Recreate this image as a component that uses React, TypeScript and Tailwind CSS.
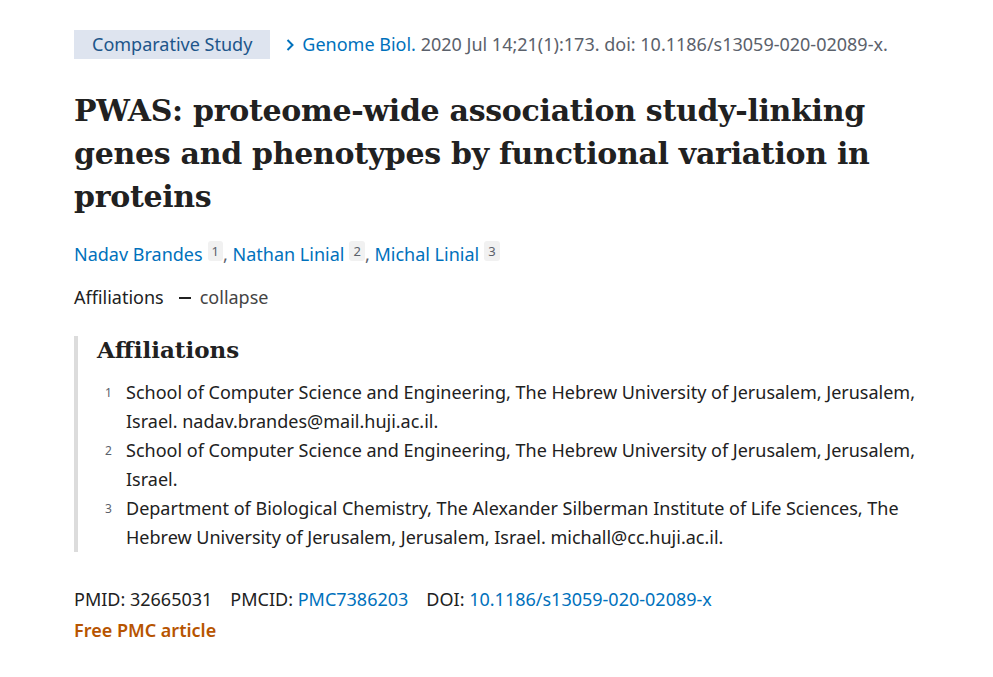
import React from 'react';

const sans = { fontFamily: '"Noto Sans", "Open Sans", sans-serif' };
const serif = { fontFamily: '"DejaVu Serif", serif' };

const affiliations = [
  'School of Computer Science and Engineering, The Hebrew University of Jerusalem, Jerusalem, Israel. nadav.brandes@mail.huji.ac.il.',
  'School of Computer Science and Engineering, The Hebrew University of Jerusalem, Jerusalem, Israel.',
  'Department of Biological Chemistry, The Alexander Silberman Institute of Life Sciences, The Hebrew University of Jerusalem, Jerusalem, Israel. michall@cc.huji.ac.il.',
];

const authors = [
  { name: 'Nadav Brandes', n: 1 },
  { name: 'Nathan Linial', n: 2 },
  { name: 'Michal Linial', n: 3 },
];

const App: React.FC = () => {
  return (
    <div className="min-h-[677px] bg-white text-[#212121]" style={sans}>
      <div className="w-[940px] pl-[74px] pt-[30px]">
        <div className="flex items-center text-[18px] leading-[29px]">
          <span className="bg-[#dee4ef] px-[18px] text-[#20558a]">Comparative Study</span>
          <svg className="ml-[15px] mr-[7px]" width="10" height="14" viewBox="0 0 10 14">
            <path d="M2.5 2 L7.5 7 L2.5 12" fill="none" stroke="#0071bc" strokeWidth="2" />
          </svg>
          <span className="whitespace-nowrap text-[#5b616b]">
            <span className="text-[#0071bc]">Genome Biol.</span> 2020 Jul 14;21(1):173. doi: 10.1186/s13059-020-02089-x.
          </span>
        </div>

        <h1 className="mt-[30px] text-[30px] font-bold leading-[43px] tracking-[-0.3px] text-[#212121]" style={serif}>
          PWAS: proteome-wide association study-linking genes and phenotypes by functional variation in proteins
        </h1>

        <div className="mt-[22px] text-[18px] leading-[29px]">
          {authors.map((a, i) => (
            <span key={a.n}>
              <span className="text-[#0071bc]">{a.name}</span>
              <span className="relative -top-[5px] ml-[5px] inline-block rounded-[3px] bg-[#f1f1f1] px-[4px] align-middle text-[13px] leading-[20px] text-[#5b616b]">
                {a.n}
              </span>
              {i < authors.length - 1 && <span className="text-[#5b616b]">, </span>}
            </span>
          ))}
        </div>

        <div className="mt-[14px] flex items-center text-[18px] leading-[29px]">
          <span>Affiliations</span>
          <span className="ml-[15px] mr-[9px] inline-block h-[2px] w-[12px] bg-[#212121]" />
          <span className="text-[#444]">collapse</span>
        </div>

        <div className="mt-[24px] border-l-[4px] border-[#dcdcdc] pl-[19px]">
          <h3 className="text-[23px] font-bold leading-[28px]" style={serif}>
            Affiliations
          </h3>
          <ul className="mt-[14px]">
            {affiliations.map((t, i) => (
              <li key={i} className="flex text-[18px] leading-[29px]">
                <span className="w-[29px] shrink-0 pl-[8px] text-[12px] text-[#5b616b]">{i + 1}</span>
                <span className="text-[#212121]">{t}</span>
              </li>
            ))}
          </ul>
        </div>

        <div className="mt-[33px] text-[18px] leading-[29px]">
          <span>PMID: 32665031</span>
          <span className="ml-[18px]">
            PMCID: <span className="text-[#0071bc]">PMC7386203</span>
          </span>
          <span className="ml-[18px]">
            DOI: <span className="text-[#0071bc]">10.1186/s13059-020-02089-x</span>
          </span>
        </div>
        <div className="mt-[2px] text-[18px] font-semibold leading-[29px] text-[#b75400]">Free PMC article</div>
      </div>
    </div>
  );
};

export default App;
